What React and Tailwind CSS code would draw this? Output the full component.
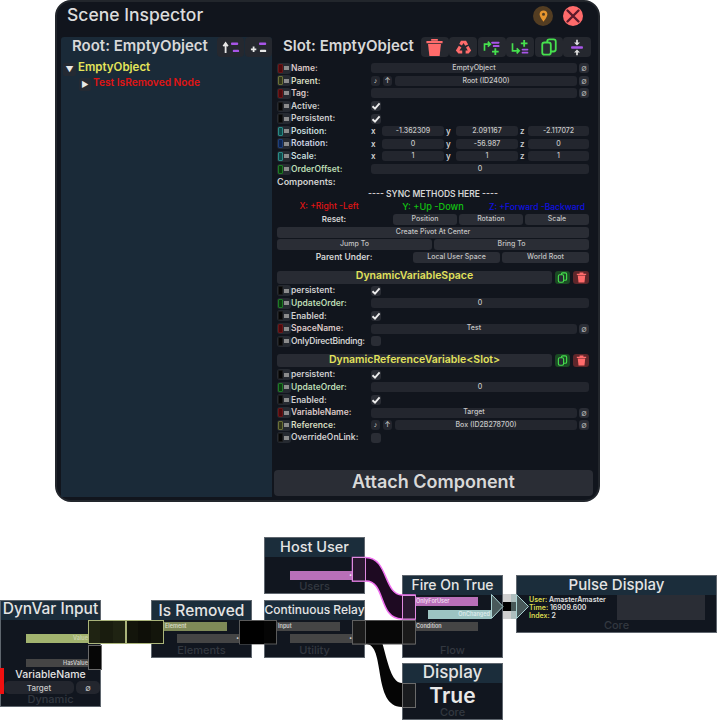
import React from 'react';

const font = { fontFamily: '"Inter", "Noto Sans", sans-serif' };

const chipColors = {
    str: 'bg-[#4d0a0c] border-[#6a1618]',
    ref: 'bg-[#30341a] border-[#6a7038]',
    bool: 'bg-[#060606] border-[#1a1a1a]',
    vec: 'bg-[#0e4a4a] border-[#2a8a86]',
    quat: 'bg-[#0c2350] border-[#1e3f7a]',
    int: 'bg-[#0a3a0e] border-[#1e7a26]',
};

const labelColors = {
    str: 'text-[#dcc8c8]',
    ref: 'text-[#d6dcc0]',
    bool: 'text-[#cfcfcf]',
    vec: 'text-[#c6dede]',
    quat: 'text-[#c8d0e0]',
    int: 'text-[#bcdcb4]',
};

function Label({ type, tight, children }) {
    return (
        <div className="w-[94px] flex items-center shrink-0">
            <div className="w-[14px] h-[11px] rounded-[3px] bg-[#262a31] flex items-center pl-[1px] gap-[1px] shrink-0">
                <div className={`w-[5px] h-[9px] rounded-[1px] border ${chipColors[type]}`}></div>
                <div className="w-[5px] h-[4px] bg-[#8c8c8c]"></div>
            </div>
            <span className={`text-[8.5px] font-semibold whitespace-nowrap ${tight ? 'tracking-[-0.2px]' : ''} ${labelColors[type]}`}>{children}</span>
        </div>
    );
}

function Field({ children, className = '' }) {
    return (
        <div className={`h-[10px] rounded-[3px] bg-[#23262e] flex items-center justify-center text-[7px] font-medium text-[#c8c8c8] whitespace-nowrap ${className}`}>
            {children}
        </div>
    );
}

function Button({ children, className = '' }) {
    return (
        <div className={`h-[11px] rounded-[3px] bg-[#2a2d35] flex items-center justify-center text-[7px] font-medium text-[#c4c4c4] whitespace-nowrap ${className}`}>
            {children}
        </div>
    );
}

function Null() {
    return (
        <div className="w-[10px] h-[10px] ml-[2px] rounded-[3px] bg-[#2a2d35] shrink-0 flex items-center justify-center text-[8px] leading-none text-[#b0b0b0]">
            ∅
        </div>
    );
}

function Row({ children, className = '' }) {
    return <div className={`h-[12.6px] flex items-center ${className}`}>{children}</div>;
}

function TextRow({ type, label, value }) {
    return (
        <Row>
            <Label type={type}>{label}</Label>
            <Field className="flex-1">{value}</Field>
            <Null />
        </Row>
    );
}

function RefRow({ type, label, value }) {
    return (
        <Row>
            <Label type={type}>{label}</Label>
            <Field className="w-[9px] mr-[3px] text-[5px]">♪</Field>
            <Field className="w-[9px] mr-[3px] text-[6px]">↑</Field>
            <Field className="flex-1">{value}</Field>
            <Null />
        </Row>
    );
}

function BoolRow({ type = 'bool', label, checked, tight }) {
    return (
        <Row>
            <Label type={type} tight={tight}>{label}</Label>
            <div className="w-[10px] h-[10px] rounded-[3px] bg-[#2a2d35] flex items-center justify-center">
                {checked && (
                    <svg viewBox="0 0 10 10" className="w-[10px] h-[10px]">
                        <path d="M1.5 5.2 L4 7.6 L8.6 2.4" fill="none" stroke="#ececec" strokeWidth="1.9" />
                    </svg>
                )}
            </div>
        </Row>
    );
}

function IntRow({ label, value = '0' }) {
    return (
        <Row>
            <Label type="int">{label}</Label>
            <Field className="flex-1">{value}</Field>
        </Row>
    );
}

function VecRow({ type, label, x, y, z }) {
    return (
        <Row>
            <Label type={type}>{label}</Label>
            <span className="w-[11px] text-[8px] font-semibold text-[#cfcfcf]">x</span>
            <Field className="w-[62px]">{x}</Field>
            <span className="w-[12px] pl-[2px] text-[8px] font-semibold text-[#cfcfcf]">y</span>
            <Field className="w-[62px]">{y}</Field>
            <span className="w-[10px] pl-[2px] text-[8px] font-semibold text-[#cfcfcf]">z</span>
            <Field className="w-[61px]">{z}</Field>
        </Row>
    );
}

function TrashIcon({ className }) {
    return (
        <svg viewBox="0 0 20 20" className={className}>
            <path d="M1.5 3.2 H18.5 V5.4 H1.5Z M6.5 1 H13.5 V3 H6.5Z" fill="#ff6b6b" />
            <path d="M3.2 6.4 H16.8 L15.4 19 H4.6Z" fill="#ff6b6b" />
        </svg>
    );
}

function CopyIcon({ className }) {
    return (
        <svg viewBox="0 0 20 20" className={className} fill="none" stroke="#46e04e" strokeWidth="2">
            <rect x="8" y="1.5" width="9.5" height="13.5" rx="2.5" />
            <rect x="2.5" y="5" width="9.5" height="13.5" rx="2.5" fill="#282c33" />
        </svg>
    );
}

function ToolButton({ children, className = 'w-[28px]' }) {
    return <div className={`h-[20px] rounded-[4px] bg-[#25282f] flex items-center justify-center shrink-0 ${className}`}>{children}</div>;
}

function ComponentHeader({ title }) {
    return (
        <div className="h-[13px] flex items-center">
            <div className="w-[275px] h-[13px] pb-[2px] rounded-[3px] bg-[#282b33] flex items-center justify-center text-[10.5px] leading-none font-semibold text-[#e2e25c] whitespace-nowrap">
                {title}
            </div>
            <div className="w-[15px] h-[13px] ml-[3px] rounded-[3px] bg-[#1b4a24] flex items-center justify-center">
                <CopyIcon className="w-[11px] h-[11px]" />
            </div>
            <div className="w-[16px] h-[13px] ml-[3px] rounded-[3px] bg-[#5e262a] flex items-center justify-center">
                <TrashIcon className="w-[11px] h-[11px]" />
            </div>
        </div>
    );
}

function Bar({ className = '', children }) {
    return <div className={`w-[63px] h-[9px] flex items-center text-[5.5px] font-semibold whitespace-nowrap px-[1px] ${className}`}>{children}</div>;
}

function Node({ title, footer, className = '', titleClass = 'text-[15px] pb-[2px]', children }) {
    return (
        <div className={`absolute flex flex-col bg-[#11161f] border border-[#5f666e] ${className}`}>
            <div className={`h-[19px] shrink-0 bg-[#1b2d3b] flex items-center justify-center font-medium leading-none text-[#e4e4e4] whitespace-nowrap ${titleClass}`}>
                {title}
            </div>
            <div className="flex-1 flex flex-col min-h-0">{children}</div>
            <div className="h-[11px] mb-[1px] shrink-0 flex items-center justify-center text-[11px] leading-none font-medium text-[#333840]">{footer}</div>
        </div>
    );
}

function Wires() {
    return (
        <svg className="absolute inset-0 w-[717px] h-[218px]" viewBox="0 502 717 218">
            {/* value wire */}
            <rect x="88.5" y="620.5" width="37" height="23" fill="#1f2312" stroke="#aab47a" />
            <rect x="100" y="621" width="13" height="22" fill="#191c0e" />
            <rect x="126.5" y="620.5" width="37" height="23" fill="#13150b" stroke="#aab47a" />
            <rect x="138" y="621" width="13" height="22" fill="#0e0f08" />
            {/* has value stub */}
            <rect x="88.5" y="645.5" width="13" height="24" fill="#060606" stroke="#6a6a6a" />
            {/* removed to relay */}
            <rect x="239.5" y="620.5" width="37" height="23.5" fill="#050505" stroke="#5a5a5a" />
            <rect x="240" y="621" width="24" height="23" fill="#000000" />
            {/* relay to display */}
            <path d="M352 620 H366 C386 620 384 683 402 683 H415 V707 H402 C372 707 386 644 366 644 H352Z" fill="#050505" />
            <rect x="352.5" y="620.5" width="62" height="23.5" fill="#070707" stroke="#505050" />
            <rect x="352.5" y="620.5" width="13" height="23.5" fill="#1a1a1a" stroke="#606060" />
            <rect x="402.5" y="620.5" width="13" height="23.5" fill="#1a1a1a" stroke="#606060" />
            <rect x="402.5" y="683.5" width="13" height="24" fill="#1a1c1f" stroke="#6a6a6a" />
            {/* user wire */}
            <path d="M352.5 557.5 H366 C388 557.5 384 595 402 595 H415 V619 H402 C378 619 386 581 366 581 H352.5Z" fill="#1e0a22" stroke="#f070f0" strokeWidth="1.5" />
            <rect x="352.5" y="557.5" width="13" height="23.5" fill="#2a1830" stroke="#e08ae0" />
            <rect x="402.5" y="595.5" width="13" height="23.5" fill="#2a1830" stroke="#e08ae0" />
            {/* pulse wire */}
            <rect x="503" y="594" width="13" height="25" fill="#000000" />
            <rect x="503" y="594" width="13" height="8" fill="#cfcfcf" />
            <rect x="503" y="611" width="13" height="8" fill="#cfcfcf" />
            <rect x="511" y="594" width="5" height="25" fill="#8fb0b0" fillOpacity="0.5" />
            <path d="M491.5 594.5 L503 606.5 L491.5 618.5Z" fill="#49595a" stroke="#a8d0d0" />
            <path d="M516.5 594.5 L528.5 606.5 L516.5 618.5Z" fill="#49595a" stroke="#a8d0d0" />
        </svg>
    );
}

export default function App() {
    return (
        <div className="relative w-[717px] h-[720px] overflow-hidden bg-white" style={font}>
            {/* Inspector */}
            <div className="ml-[55px] w-[545px] h-[502px] rounded-[16px] border-2 border-[#22262c] bg-[#11151d] flex flex-col">
                <div className="h-[35px] shrink-0 flex items-center pl-[10px] pr-[15px]">
                    <h1 className="text-[17.5px] font-medium text-[#dcdcdc] mb-[8px]">Scene Inspector</h1>
                    <div className="ml-auto mb-[7px] w-[20px] h-[20px] rounded-full bg-[#533d22] flex items-center justify-center">
                        <svg viewBox="0 0 12 16" className="w-[9px] h-[12px]">
                            <path d="M6 0.5 C2.8 0.5 0.8 2.8 0.8 5.6 C0.8 9 6 15.5 6 15.5 C6 15.5 11.2 9 11.2 5.6 C11.2 2.8 9.2 0.5 6 0.5Z M6 3.6 A2 2 0 1 1 6 7.6 A2 2 0 1 1 6 3.6Z" fill="#e8962e" fillRule="evenodd" />
                        </svg>
                    </div>
                    <div className="ml-[10px] mb-[7px] w-[20px] h-[20px] rounded-full bg-[#ff6b6b] flex items-center justify-center">
                        <svg viewBox="0 0 20 20" className="w-[20px] h-[20px]">
                            <path d="M4.5 4.5 L15.5 15.5 M15.5 4.5 L4.5 15.5" stroke="#5c1a2a" strokeWidth="2.4" strokeLinecap="round" />
                        </svg>
                    </div>
                </div>

                <div className="flex-1 flex pl-[4px] min-h-0">
                    {/* Tree */}
                    <div className="w-[211px] h-[460px] rounded-t-[3px] bg-[#1a2a38] shrink-0">
                        <div className="h-[20px] flex items-center">
                            <span className="ml-[11px] mb-[2px] text-[15px] font-semibold text-[#d8d8d8] whitespace-nowrap">Root: EmptyObject</span>
                            <div className="ml-auto flex gap-[1px]">
                                <ToolButton className="w-[27px]">
                                    <svg viewBox="0 0 20 14" className="w-[18px] h-[13px]">
                                        <path d="M4 13 V4 M1.5 5.5 L4 2 L6.5 5.5" fill="none" stroke="#e8e8e8" strokeWidth="2" />
                                        <rect x="10" y="1.5" width="8" height="2.6" rx="1" fill="#a855e8" />
                                        <rect x="12" y="9.5" width="7" height="2.6" rx="1" fill="#a855e8" />
                                    </svg>
                                </ToolButton>
                                <ToolButton className="w-[27px]">
                                    <svg viewBox="0 0 20 14" className="w-[18px] h-[13px]">
                                        <path d="M1 9 H7 M4 6 V12" fill="none" stroke="#e8e8e8" strokeWidth="2" />
                                        <rect x="10" y="1.5" width="8" height="2.6" rx="1" fill="#a855e8" />
                                        <rect x="11" y="9.5" width="7" height="2.6" rx="1" fill="#e8e8e8" />
                                    </svg>
                                </ToolButton>
                            </div>
                        </div>
                        <div className="flex items-center mt-[6px] ml-[2px] h-[13px]">
                            <div className="w-[13px] h-[13px] rounded-[2px] bg-[#242a33] flex items-center justify-center pb-[2px] text-[8px] leading-none text-[#e8e8e8]">▼</div>
                            <span className="ml-[2px] mb-[3px] text-[11.5px] font-semibold text-[#e4e45a]">EmptyObject</span>
                        </div>
                        <div className="flex items-center mt-[2px] ml-[18px] h-[13px]">
                            <div className="w-[12px] h-[13px] rounded-[2px] bg-[#242a33] flex items-center justify-center pb-[2px] text-[8px] leading-none text-[#e8e8e8]">▶</div>
                            <span className="ml-[2px] mb-[3px] text-[10.2px] font-semibold text-[#e01414] whitespace-nowrap">Test IsRemoved Node</span>
                        </div>
                    </div>

                    {/* Slot */}
                    <div className="ml-[2px] w-[319px] flex flex-col">
                        <div className="h-[20px] flex items-center pr-[2px]">
                            <span className="ml-[9px] mb-[2px] text-[15px] font-semibold text-[#d8d8d8] whitespace-nowrap">Slot: EmptyObject</span>
                            <div className="ml-auto flex gap-[0.5px]">
                                <ToolButton><TrashIcon className="w-[19px] h-[19px]" /></ToolButton>
                                <ToolButton>
                                    <svg viewBox="0 0 20 20" className="w-[17px] h-[17px]">
                                        <path d="M7 2 H13 L15.5 6.5 L12 8 L10 4.8 L8.2 7.6 L5 6Z M15.8 8 L19 13.5 L16 17 H12.5 V13.5 H15 L13 10Z M4.5 8 L7.6 10 L5.2 13.5 H8.5 V17 H4 L1 13.5Z" fill="#ff6b6b" />
                                    </svg>
                                </ToolButton>
                                <ToolButton>
                                    <svg viewBox="0 0 24 20" className="w-[20px] h-[17px]" fill="none">
                                        <path d="M3 14 V6 H9 M7 3 L10 6 L7 9" stroke="#46e04e" strokeWidth="2" />
                                        <rect x="11" y="3" width="10" height="2.4" rx="1" fill="#a855e8" />
                                        <rect x="13" y="7" width="8" height="2.4" rx="1" fill="#a855e8" />
                                        <path d="M16 11 V19 M12 15 H20" stroke="#46e04e" strokeWidth="2.2" />
                                    </svg>
                                </ToolButton>
                                <ToolButton>
                                    <svg viewBox="0 0 24 20" className="w-[20px] h-[17px]" fill="none">
                                        <path d="M3 5 V14 H10 M8 11 L11 14 L8 17" stroke="#46e04e" strokeWidth="2" />
                                        <path d="M17 1 V9 M13 5 H21" stroke="#46e04e" strokeWidth="2.2" />
                                        <rect x="14" y="11.5" width="8" height="2.2" rx="1" fill="#a855e8" />
                                        <rect x="14" y="15" width="8" height="2.2" rx="1" fill="#a855e8" />
                                    </svg>
                                </ToolButton>
                                <ToolButton><CopyIcon className="w-[18px] h-[18px]" /></ToolButton>
                                <ToolButton>
                                    <svg viewBox="0 0 16 20" className="w-[14px] h-[17px]">
                                        <rect x="1" y="8.6" width="14" height="2.8" rx="1" fill="#a855e8" />
                                        <path d="M8 1 V5 M8 15 V19" stroke="#e0e0e0" strokeWidth="2" />
                                        <path d="M4.5 4 H11.5 L8 7.6Z M4.5 16 H11.5 L8 12.4Z" fill="#e0e0e0" />
                                    </svg>
                                </ToolButton>
                            </div>
                        </div>

                        <div className="mt-[5px] ml-[3px] w-[312px]">
                            <TextRow type="str" label="Name:" value="EmptyObject" />
                            <RefRow type="ref" label="Parent:" value="Root (ID2400)" />
                            <TextRow type="str" label="Tag:" value="" />
                            <BoolRow label="Active:" checked />
                            <BoolRow label="Persistent:" checked />
                            <VecRow type="vec" label="Position:" x="-1.362309" y="2.091167" z="-2.117072" />
                            <VecRow type="quat" label="Rotation:" x="0" y="-56.987" z="0" />
                            <VecRow type="vec" label="Scale:" x="1" y="1" z="1" />
                            <IntRow label="OrderOffset:" />
                            <Row className="text-[9px] font-semibold text-[#cfcfcf]">Components:</Row>
                            <Row className="justify-center text-[8.5px] font-semibold text-[#d4d4d4]">---- SYNC METHODS HERE ----</Row>
                            <Row className="text-[8.5px] font-medium">
                                <span className="w-[104px] text-center text-[#e01414]">X: +Right -Left</span>
                                <span className="w-[104px] text-center text-[9.2px] text-[#12c012]">Y: +Up -Down</span>
                                <span className="w-[104px] mt-[1px] text-center text-[#1010e0] whitespace-nowrap">Z: +Forward -Backward</span>
                            </Row>
                            <Row>
                                <span className="w-[114px] text-center text-[8px] font-semibold text-[#d4d4d4]">Reset:</span>
                                <Button className="w-[64px] ml-[2px]">Position</Button>
                                <Button className="w-[64px] ml-[2px]">Rotation</Button>
                                <Button className="w-[64px] ml-[2px]">Scale</Button>
                            </Row>
                            <Row><Button className="w-full">Create Pivot At Center</Button></Row>
                            <Row>
                                <Button className="w-[155px]">Jump To</Button>
                                <Button className="w-[155px] ml-[2px]">Bring To</Button>
                            </Row>
                            <Row>
                                <span className="w-[134px] text-center text-[8.5px] font-semibold text-[#d4d4d4]">Parent Under:</span>
                                <Button className="w-[87px] ml-[2px] text-[5.8px]">Local User Space</Button>
                                <Button className="w-[87px] ml-[2px] text-[6px]">World Root</Button>
                            </Row>

                            <div className="mt-[7px]"><ComponentHeader title="DynamicVariableSpace" /></div>
                            <div className="mt-[1px]">
                                <BoolRow label="persistent:" checked />
                                <IntRow label="UpdateOrder:" />
                                <BoolRow label="Enabled:" checked />
                                <TextRow type="str" label="SpaceName:" value="Test" />
                                <BoolRow label="OnlyDirectBinding:" tight />
                            </div>

                            <div className="mt-[7px]"><ComponentHeader title="DynamicReferenceVariable<Slot>" /></div>
                            <div className="mt-[1px]">
                                <BoolRow label="persistent:" checked />
                                <IntRow label="UpdateOrder:" />
                                <BoolRow label="Enabled:" checked />
                                <TextRow type="str" label="VariableName:" value="Target" />
                                <RefRow type="ref" label="Reference:" value="Box (ID2B278700)" />
                                <BoolRow label="OverrideOnLink:" />
                            </div>
                        </div>

                        <div className="mt-auto mb-[4px] h-[26px] pb-[3px] rounded-[4px] bg-[#2a2d35] flex items-center justify-center text-[18px] leading-none font-semibold text-[#d8d8d8]">
                            Attach Component
                        </div>
                    </div>
                </div>
            </div>

            {/* Node canvas */}
            <div className="absolute left-0 top-[502px] w-[717px] h-[218px]">
                <Node title="DynVar Input" footer="Dynamic" titleClass="text-[15.5px] pb-[3px]" className="left-0 top-[98px] w-[101px] h-[107px]">
                    <Bar className="mt-[14px] ml-[25px] justify-end bg-[#a2b36f] text-[#c9d2ac]">Value</Bar>
                    <Bar className="mt-[16px] ml-[25px] justify-end bg-[#454545] text-[#c8c8c8]">HasValue</Bar>
                    <div className="relative mt-[2px] text-center text-[10.5px] font-medium text-[#e4e4e4] leading-[11px]">
                        VariableName
                        <div className="absolute -left-[1px] top-[-1px] w-[4px] h-[26px] bg-[#f01010]"></div>
                    </div>
                    <div className="flex mt-[1px] pl-[3px] h-[13px]">
                        <div className="w-[70px] rounded-[5px] bg-[#23262e] flex items-center justify-center text-[8px] font-medium text-[#c8c8c8]">Target</div>
                        <div className="w-[24px] ml-[2px] rounded-[5px] bg-[#23262e] flex items-center justify-center text-[8px] text-[#c8c8c8]">∅</div>
                    </div>
                </Node>

                <Node title="Is Removed" footer="Elements" titleClass="text-[15.5px]" className="left-[151px] top-[98px] w-[101px] h-[58px]">
                    <Bar className="mt-[2px] ml-[12px] bg-[#7f8a58] text-[#d8dcc4]">Element</Bar>
                    <Bar className="mt-[3px] ml-[25px] justify-end bg-[#454545] text-[#d0d0d0]">•</Bar>
                </Node>

                <Node title="Host User" footer="Users" titleClass="text-[14.5px]" className="left-[264px] top-[35px] w-[101px] h-[57px]">
                    <Bar className="mt-[14px] ml-[25px] justify-end bg-[#b96fb9] text-[#eeeeee]">•</Bar>
                </Node>

                <Node title="Continuous Relay" footer="Utility" titleClass="text-[12px] pb-[2px]" className="left-[264px] top-[98px] w-[101px] h-[58px]">
                    <Bar className="mt-[2px] ml-[12px] bg-[#454545] text-[#d0d0d0]">Input</Bar>
                    <Bar className="mt-[3px] ml-[25px] justify-end bg-[#454545] text-[#d0d0d0]">•</Bar>
                </Node>

                <Node title="Fire On True" footer="Flow" titleClass="text-[14px] pb-[1px]" className="left-[402px] top-[73px] w-[101px] h-[83px]">
                    <Bar className="mt-[2px] ml-[12px] bg-[#b96fb9] text-[#f0dcf0]">OnlyForUser</Bar>
                    <Bar className="mt-[4px] ml-[25px] justify-end bg-[#9cc4c2] text-[#dcecec]">OnChanged</Bar>
                    <Bar className="mt-[3px] ml-[12px] bg-[#454545] text-[#d0d0d0]">Condition</Bar>
                </Node>

                <Node title="Display" footer="Core" titleClass="text-[17px] pb-[2px]" className="left-[402px] top-[161px] w-[101px] h-[57px]">
                    <div className="h-[24px] flex items-center justify-center text-[21px] leading-none font-semibold text-[#e8e8e8]">True</div>
                </Node>

                <Node title="Pulse Display" footer="Core" className="left-[516px] top-[73px] w-[201px] h-[58px]">
                    <div className="flex-1 flex">
                        <div className="ml-[12px] w-[88px] pt-[1px] text-[7px] leading-[8px] font-semibold text-[#e0e0e0] whitespace-nowrap">
                            <div><span className="text-[#dcdc50]">User:</span> AmasterAmaster</div>
                            <div><span className="text-[#dcdc50]">Time:</span> 16909.600</div>
                            <div><span className="text-[#dcdc50]">Index:</span> 2</div>
                        </div>
                        <div className="w-[88px] h-[25px] bg-[#2a2d35]"></div>
                    </div>
                </Node>

                <Wires />
            </div>
        </div>
    );
}
